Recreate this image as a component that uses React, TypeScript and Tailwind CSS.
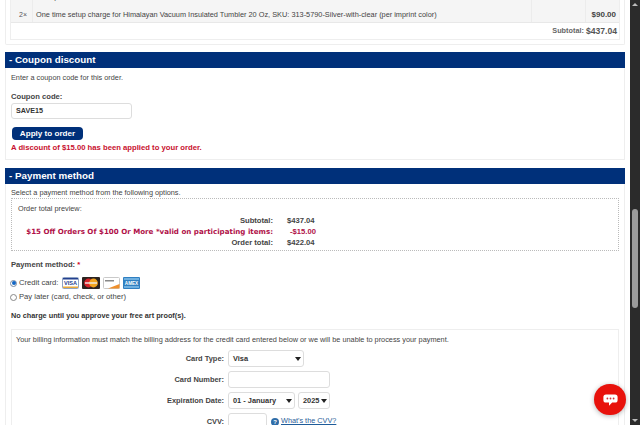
const F = "font-['Liberation_Sans',Arial,sans-serif]";

function Field({ label, children, mt }: { label: string; children: React.ReactNode; mt: string }) {
  return (
    <div className={`flex items-center ${mt}`}>
      <div className="w-[212px] pr-[4px] text-right text-[7.45px] font-bold leading-[16px] text-[#444]">{label}</div>
      {children}
    </div>
  );
}

function Select({ w, label }: { w: string; label: string }) {
  return (
    <div className={`flex h-[17px] items-center justify-between rounded-[3px] border border-[#ddd] bg-white pl-[4px] pr-[2px] text-[7.4px] font-bold text-[#333] ${w}`}>
      <span>{label}</span>
      <span className="h-0 w-0 border-x-[3px] border-t-[4px] border-x-transparent border-t-[#222]" />
    </div>
  );
}

function Cards() {
  return (
    <div className="ml-[3px] flex items-center gap-[3px]">
      <svg width="17" height="12" viewBox="0 0 17 12"><rect x=".5" y=".5" width="16" height="11" rx="1" fill="#fff" stroke="#8fa3c4" /><rect x="1" y="1" width="15" height="1.5" fill="#23408f" /><rect x="1" y="9.5" width="15" height="1.5" fill="#e9a93a" /><text x="8.5" y="8.2" textAnchor="middle" fontSize="5.6" fontWeight="700" fill="#23408f" fontFamily="Liberation Sans">VISA</text></svg>
      <svg width="18" height="12" viewBox="0 0 18 12"><rect width="18" height="12" rx="1" fill="#2b2320" /><circle cx="6.5" cy="6" r="4.4" fill="#d8232a" /><circle cx="11.5" cy="6" r="4.4" fill="#f2a51f" /><rect x="3" y="5" width="12" height="2" fill="#eee" opacity=".7" /></svg>
      <svg width="17" height="12" viewBox="0 0 17 12"><rect x=".5" y=".5" width="16" height="11" rx="1" fill="#fff" stroke="#c9c9c9" /><rect x="2" y="3" width="9" height="1.5" fill="#888" /><path d="M5 11.5 L16.5 7 V11.5 Z" fill="#ef8f2b" /></svg>
      <svg width="17" height="12" viewBox="0 0 17 12"><rect width="17" height="12" rx="1" fill="#2f7fc1" /><rect x="1" y="1" width="15" height="2" fill="#6fb0e0" /><rect x="1" y="9" width="15" height="2" fill="#6fb0e0" /><text x="8.5" y="8" textAnchor="middle" fontSize="4.6" fontWeight="700" fill="#fff" fontFamily="Liberation Sans">AMEX</text></svg>
    </div>
  );
}

export default function App() {
  return (
    <div className={`flex h-[425px] w-[640px] overflow-hidden bg-white text-[#444] ${F}`}>
      <div className="relative h-full w-[630px] overflow-hidden px-[5px]">
        {/* Order summary tail */}
        <div className="h-[45px] rounded-b-[2px] border-x border-b border-[#eee] px-[4px]">
          <div className="h-[40px] border-x border-b border-[#eee]">
            <div className="flex h-[23px] border-b border-[#e8e8e8] bg-[#f5f5f5]">
              <div className="w-[22px] border-r border-[#ececec] pt-[10px] pl-[8px] text-[7px] leading-[10px] text-[#555]">2×</div>
              <div className="relative flex-1 whitespace-nowrap pl-[3px] pt-[10px] text-[7.35px] leading-[10px] text-[#444]">
                <span className="absolute left-[13px] top-[-8px] leading-[10px]">Imprint Color 2: Silver</span>
                One time setup charge for Himalayan Vacuum Insulated Tumbler 20 Oz, SKU: 313-5790-Silver-with-clear (per imprint color)
              </div>
              <div className="w-[55px] border-x border-[#ececec]" />
              <div className="w-[33px] pt-[9px] pr-[3px] text-right text-[8px] font-bold leading-[11px] text-[#444]">$90.00</div>
            </div>
            <div className="flex h-[16px] items-center justify-end pr-[2px]">
              <span className="text-[7.3px] font-bold text-[#666]">Subtotal:</span>
              <span className="ml-[2px] text-[8.6px] font-bold text-[#555]">$437.04</span>
            </div>
          </div>
        </div>

        {/* Coupon */}
        <div className="mt-[7px] h-[108px] border-x border-b border-[#eee]">
          <h2 className="-mx-px flex h-[16px] items-center bg-[#00307a] pl-[4px] text-[9.8px] font-bold text-white">- Coupon discount</h2>
          <p className="mt-[5px] pl-[5px] text-[7.3px] leading-[10px]">Enter a coupon code for this order.</p>
          <div className="mt-[8px] pl-[5px] text-[7.65px] font-bold leading-[11px]">Coupon code:</div>
          <div className="ml-[5px] mt-[1px] flex h-[16px] w-[121px] items-center rounded-[3px] border border-[#ddd] pl-[4px] text-[7.2px] font-bold text-[#333]">SAVE15</div>
          <button className="ml-[6px] mt-[8px] block h-[13px] w-[71px] rounded-[4px] bg-[#00307a] text-[8.1px] font-bold leading-[13px] text-white">Apply to order</button>
          <p className="mt-[2px] pl-[5px] text-[7.7px] font-bold leading-[11px] text-[#c8102e]">A discount of $15.00 has been applied to your order.</p>
        </div>

        {/* Payment */}
        <div className="mt-[8px] border-x border-[#eee]">
          <h2 className="-mx-px flex h-[16px] items-center bg-[#00307a] pl-[4px] text-[9.8px] font-bold text-white">- Payment method</h2>
          <p className="mt-[4px] pl-[5px] text-[7.3px] leading-[10px]">Select a payment method from the following options.</p>
          <div className="mx-[5px] h-[53px] border border-dotted border-[#bbb] pt-[5px]">
            <div className="pl-[6px] text-[7.3px] leading-[10px]">Order total preview:</div>
            <div className="mt-[1px] flex text-[7.65px] font-bold leading-[11px]">
              <span className="w-[261px] text-right">Subtotal:</span>
              <span className="ml-[14px]">$437.04</span>
            </div>
            <div className="flex text-[7.65px] font-bold leading-[11px] text-[#b01048]">
              <span className="w-[261px] whitespace-nowrap text-right font-['DejaVu_Sans',sans-serif] text-[7.1px]">$15 Off Orders Of $100 Or More *valid on participating items:</span>
              <span className="ml-[17px]">-$15.00</span>
            </div>
            <div className="flex text-[7.65px] font-bold leading-[11px]">
              <span className="w-[261px] text-right">Order total:</span>
              <span className="ml-[14px]">$422.04</span>
            </div>
          </div>
          <div className="mt-[8px] pl-[5px] text-[7.65px] font-bold leading-[11px]">Payment method: <span className="text-[#d0021b]">*</span></div>
          <div className="mt-[7px] flex h-[12px] items-center pl-[4px] text-[7.65px] leading-[12px]">
            <span className="mr-[2px] flex h-[7px] w-[7px] items-center justify-center rounded-full border border-[#7a8aa0] bg-white"><span className="h-[4px] w-[4px] rounded-full bg-[#1266c4]" /></span>
            Credit card:
            <Cards />
          </div>
          <div className="mt-[2px] flex h-[12px] items-center pl-[4px] text-[7.65px] leading-[12px]">
            <span className="mr-[2px] h-[7px] w-[7px] rounded-full border border-[#888] bg-white" />
            Pay later (card, check, or other)
          </div>
          <p className="mt-[8px] pl-[5px] text-[7.3px] font-bold leading-[10px] text-[#333]">No charge until you approve your free art proof(s).</p>
          <div className="mx-[5px] mt-[8px] border border-[#eee] pl-[4px] pt-[5px]">
            <p className="whitespace-nowrap text-[7.33px] leading-[10px]">Your billing information must match the billing address for the credit card entered below or we will be unable to process your payment.</p>
            <Field label="Card Type:" mt="mt-[5px]"><Select w="w-[76px]" label="Visa" /></Field>
            <Field label="Card Number:" mt="mt-[4px]"><div className="h-[17px] w-[102px] rounded-[3px] border border-[#ddd]" /></Field>
            <Field label="Expiration Date:" mt="mt-[4px]">
              <Select w="w-[67px]" label="01 - January" />
              <div className="ml-[3px]"><Select w="w-[32px]" label="2025" /></div>
            </Field>
            <Field label="CVV:" mt="mt-[4px]">
              <div className="h-[17px] w-[39px] rounded-[3px] border border-[#ddd]" />
              <span className="ml-[4px] flex h-[8px] w-[8px] items-center justify-center rounded-full bg-[#2f6da8] text-[6px] font-bold leading-none text-white">?</span>
              <span className="ml-[2px] text-[7.3px] text-[#1f5c99] underline">What's the CVV?</span>
            </Field>
          </div>
        </div>

        {/* Chat */}
        <div className="absolute left-[594px] top-[384px] flex h-[31px] w-[32px] items-center justify-center rounded-full bg-[#e8120c] shadow-[0_1px_5px_rgba(0,0,0,0.3)]">
          <svg width="15" height="14" viewBox="0 0 15 14"><path d="M3 1.5h9a2.6 2.6 0 0 1 2.6 2.6v2.8A2.6 2.6 0 0 1 12 9.5H9.2L6 12.8V9.5H3A2.6 2.6 0 0 1 .4 6.9V4.1A2.6 2.6 0 0 1 3 1.5Z" fill="#fff" /><circle cx="4.4" cy="5.5" r=".9" fill="#d3303c" /><circle cx="7.5" cy="5.5" r=".9" fill="#d3303c" /><circle cx="10.6" cy="5.5" r=".9" fill="#d3303c" /></svg>
        </div>
      </div>

      {/* Scrollbar */}
      <div className="relative flex h-full w-[10px] flex-col items-center justify-between bg-[#2b2b2b] py-[3px]">
        <span className="h-0 w-0 border-x-[3px] border-b-[3px] border-x-transparent border-b-[#bbb]" />
        <span className="absolute left-[2px] top-[209px] h-[99px] w-[6px] rounded-full bg-[#9b9b9b]" />
        <span className="h-0 w-0 border-x-[3px] border-t-[3px] border-x-transparent border-t-[#bbb]" />
      </div>
    </div>
  );
}
